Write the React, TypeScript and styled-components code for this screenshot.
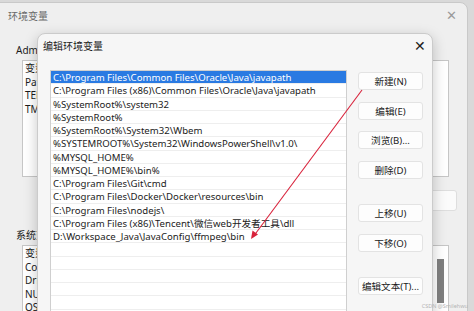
import React from 'react';
import styled, {createGlobalStyle} from 'styled-components';

const GlobalStyle = createGlobalStyle`
    html, body {
        margin:0;
        padding:0;
        background:#d9d9d9;
        overflow:hidden;
    }
    body {
        font-family:"Noto Sans", "Noto Sans CJK SC", sans-serif;
        color:#1b1b1b;
    }
`

const Desktop = styled.div`
    position:relative;
    width:474px;
    height:311px;
    overflow:hidden;
`

// the outer "环境变量" window, behind
const OuterWindow = styled.div`
    position:absolute;
    left:-12px;
    top:2px;
    width:480px;
    height:340px;
    background:#efefef;
    border:1px solid #c9c9c9;
    border-radius:8px;
    box-sizing:border-box;
    display:flex;
    flex-direction:column;
    padding:0 18px 0 19px;
`

const OuterTitleBar = styled.div`
    height:24px;
    display:flex;
    align-items:center;
    justify-content:space-between;
    font-size:10px;
    color:#6a6a6a;
`

const OuterClose = styled.div`
    font-size:13px;
    color:#9a9a9a;
    margin-right:-8px;
`

const GroupLabel = styled.div<{mt?: number}>`
    font-size:10px;
    margin:${p => p.mt ?? 16}px 0 0 8px;
    height:14px;
    line-height:14px;
`

const OuterList = styled.div<{h: number}>`
    margin:3px 0 0 14px;
    height:${p => p.h}px;
    background:#fff;
    border:1px solid #c6c6c6;
    display:flex;
    box-sizing:border-box;
`

const OuterCol = styled.div`
    flex:1;
    padding:1px 0 0 2px;
    font-size:10px;
    line-height:13.5px;
`

const OuterScroll = styled.div`
    width:15px;
    border-left:1px solid #e0e0e0;
    display:flex;
    justify-content:center;
    padding-top:13px;
`

const Thumb = styled.div`
    width:7px;
    height:44px;
    background:#808080;
`

const OuterButtons = styled.div`
    display:flex;
    justify-content:flex-end;
    margin-top:13px;
    height:21px;
`

const OuterBtn = styled.div`
    width:60px;
    margin-right:-8px;
    background:#fbfbfb;
    border:1px solid #dedede;
    border-radius:3px;
`

// the "编辑环境变量" dialog, in front
const Dialog = styled.div`
    position:absolute;
    left:37px;
    top:33px;
    width:396px;
    height:300px;
    background:#f6f6f6;
    border:1px solid #cbcbcb;
    border-radius:8px;
    box-sizing:border-box;
    box-shadow:0 4px 14px rgba(0,0,0,0.22);
    display:flex;
    flex-direction:column;
`

const DialogTitle = styled.div`
    height:23px;
    display:flex;
    align-items:center;
    justify-content:space-between;
    padding:0 6px 0 5px;
    font-size:10px;
`

const CloseX = styled.div`
    font-size:14px;
    font-weight:300;
    color:#222;
    line-height:1;
`

const Body = styled.div`
    display:flex;
    gap:11px;
    padding:13px 9px 0 12px;
    flex:1;
    min-height:0;
`

const PathList = styled.div`
    width:297px;
    background:#fff;
    border:1px solid #cfcfcf;
    border-bottom:none;
    box-sizing:border-box;
    overflow:hidden;
`

const Row = styled.div<{selected?: boolean}>`
    height:13.25px;
    line-height:13.25px;
    padding-left:2px;
    font-size:9.6px;
    white-space:nowrap;
    box-sizing:border-box;
    border-bottom:1px solid #eeeeee;
    background:${p => p.selected ? '#2a7ae2' : 'transparent'};
    color:${p => p.selected ? '#fff' : '#1b1b1b'};
`

const ButtonCol = styled.div`
    width:65px;
    display:flex;
    flex-direction:column;
    gap:11.5px;
    padding-top:2px;
`

const Btn = styled.div<{gapBefore?: boolean}>`
    height:18px;
    background:#fdfdfd;
    border:1px solid #e3e3e3;
    border-radius:3px;
    box-sizing:border-box;
    display:flex;
    align-items:center;
    justify-content:center;
    font-size:9.6px;
    margin-top:${p => p.gapBefore ? '14px' : '0'};
`

const Arrow = styled.svg`
    position:absolute;
    left:0;
    top:0;
    pointer-events:none;
`

const Watermark = styled.div`
    position:absolute;
    right:6px;
    bottom:1px;
    font-size:5.5px;
    color:#b4b4b4;
`

const paths = [
    'C:\\Program Files\\Common Files\\Oracle\\Java\\javapath',
    'C:\\Program Files (x86)\\Common Files\\Oracle\\Java\\javapath',
    '%SystemRoot%\\system32',
    '%SystemRoot%',
    '%SystemRoot%\\System32\\Wbem',
    '%SYSTEMROOT%\\System32\\WindowsPowerShell\\v1.0\\',
    '%MYSQL_HOME%',
    '%MYSQL_HOME%\\bin%',
    'C:\\Program Files\\Git\\cmd',
    'C:\\Program Files\\Docker\\Docker\\resources\\bin',
    'C:\\Program Files\\nodejs\\',
    'C:\\Program Files (x86)\\Tencent\\微信web开发者工具\\dll',
    'D:\\Workspace_Java\\JavaConfig\\ffmpeg\\bin',
    '', '', '', '', '', '', '', ''
]

function App() {
    return (
        <Desktop>
            <GlobalStyle/>
            <OuterWindow>
                <OuterTitleBar>
                    <span>环境变量</span>
                    <OuterClose>✕</OuterClose>
                </OuterTitleBar>
                <GroupLabel>Administrator 的用户变量(U)</GroupLabel>
                <OuterList h={117}>
                    <OuterCol>
                        <div>变量</div>
                        <div>Path</div>
                        <div>TEMP</div>
                        <div>TMP</div>
                    </OuterCol>
                </OuterList>
                <OuterButtons><OuterBtn/></OuterButtons>
                <GroupLabel mt={17}>系统变量(S)</GroupLabel>
                <OuterList h={90}>
                    <OuterCol>
                        <div>变量</div>
                        <div>ComSpec</div>
                        <div>DriverData</div>
                        <div>NUMBER_OF_PROCESSORS</div>
                        <div>OS</div>
                    </OuterCol>
                    <OuterScroll><Thumb/></OuterScroll>
                </OuterList>
            </OuterWindow>

            <Dialog>
                <DialogTitle>
                    <span>编辑环境变量</span>
                    <CloseX>✕</CloseX>
                </DialogTitle>
                <Body>
                    <PathList>
                        {paths.map((p, i) => <Row key={i} selected={i === 0}>{p}</Row>)}
                    </PathList>
                    <ButtonCol>
                        <Btn>新建(N)</Btn>
                        <Btn>编辑(E)</Btn>
                        <Btn>浏览(B)...</Btn>
                        <Btn>删除(D)</Btn>
                        <Btn gapBefore>上移(U)</Btn>
                        <Btn>下移(O)</Btn>
                        <Btn gapBefore>编辑文本(T)...</Btn>
                    </ButtonCol>
                </Body>
            </Dialog>

            <Arrow width={474} height={311}>
                <line x1={362} y1={90} x2={253} y2={237} stroke="#d8223b" strokeWidth={1.1}/>
                <polygon points="251,239 252.5,230.5 258,234.5" fill="#d8223b"/>
            </Arrow>
            <Watermark>CSDN @Smilehwu</Watermark>
        </Desktop>
    );
}

export default App;
